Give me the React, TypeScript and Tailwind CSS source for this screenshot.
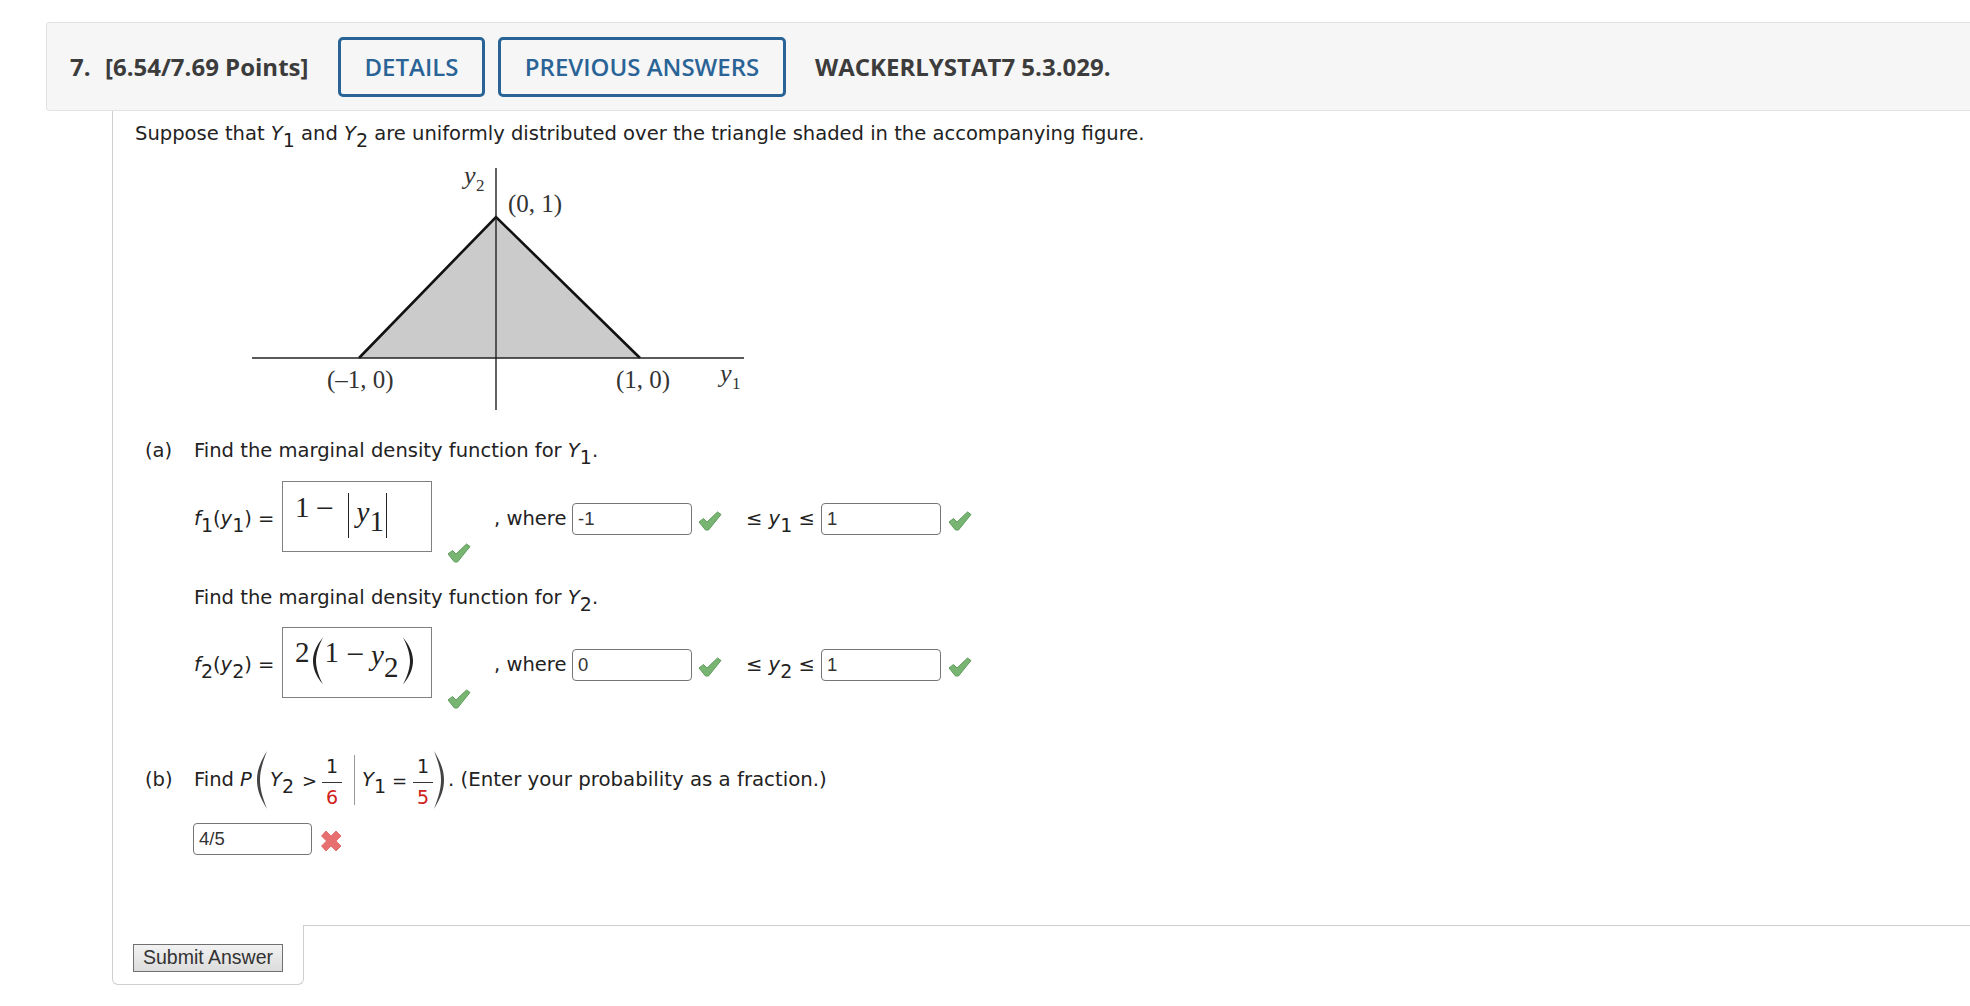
import React from 'react';

const Sub = ({ children }: { children: React.ReactNode }) => (
  <span className="text-[19px] not-italic align-[-7px] leading-none">{children}</span>
);

const Check = () => (
  <svg width="24" height="20" viewBox="0 0 24 20" className="shrink-0">
    <path d="M1 11 L5.5 7.5 L9 11 L19.5 1 L23 3.5 L10.5 19 L7.5 19 Z" fill="#78b573" stroke="#5f9c5c" strokeWidth="1" strokeLinejoin="round" />
  </svg>
);

const Cross = () => (
  <svg width="22" height="22" viewBox="0 0 22 22" className="shrink-0">
    <path d="M1.5 6 L6 1 L11 6 L16 1 L21 6 L16 11 L21 16 L16 21 L11 16 L6 21 L1.5 16 L6.5 11 Z" fill="#e76f6f" stroke="#e06060" strokeWidth="0.8" strokeLinejoin="round" />
  </svg>
);

const TextBox = ({ value, width = 'w-[120px]' }: { value: string; width?: string }) => (
  <input
    readOnly
    defaultValue={value}
    className={`${width} h-[32px] border border-[#767676] rounded-[4px] px-[5px] text-[18.5px] text-[#333] bg-white font-['Liberation_Sans',sans-serif] outline-none shrink-0`}
  />
);

const Fraction = ({ bottom }: { bottom: string }) => (
  <span className="inline-flex flex-col items-center w-[20px] h-[60px] text-[19px] shrink-0">
    <span className="border-b border-[#333] w-full text-center h-[33px] leading-[33px]">1</span>
    <span className="text-[#d0201a] leading-[27px] mt-[1px]">{bottom}</span>
  </span>
);

const BigParen = ({ flip }: { flip?: boolean }) => (
  <svg width="12" height="60" viewBox="0 0 12 60" className="shrink-0">
    <path
      d={flip ? 'M1 1 C9 14 11 22 11 30 C11 38 9 46 1 59 C6 46 8 38 8 30 C8 22 6 14 1 1 Z' : 'M11 1 C3 14 1 22 1 30 C1 38 3 46 11 59 C6 46 4 38 4 30 C4 22 6 14 11 1 Z'}
      fill="#444"
    />
  </svg>
);

const MathParen = ({ flip }: { flip?: boolean }) => (
  <svg width="12" height="48" viewBox="0 0 12 48" className="shrink-0">
    <path
      d={flip ? 'M1 0.5 C9 10 11 18 11 24 C11 30 9 38 1 47.5 C6 38 8 30 8 24 C8 18 6 10 1 0.5 Z' : 'M11 0.5 C3 10 1 18 1 24 C1 30 3 38 11 47.5 C6 38 4 30 4 24 C4 18 6 10 11 0.5 Z'}
      fill="#222"
    />
  </svg>
);

const Minus = () => <span className="text-[32px] leading-none w-[18px] text-center shrink-0">−</span>;

const Figure = () => (
  <svg width="500" height="247" viewBox="0 0 500 247" className="block ml-[118px]" fontFamily="'Liberation Serif', serif" fill="#333" fontSize="25">
    <polygon points="107,193 244,52 388,193" fill="#cbcbcb" />
    <path d="M107 193 L244 52 L388 193" fill="none" stroke="#111" strokeWidth="2.6" />
    <line x1="0" y1="193" x2="492" y2="193" stroke="#222" strokeWidth="1.4" />
    <line x1="244" y1="3" x2="244" y2="245" stroke="#222" strokeWidth="1.4" />
    <text x="212" y="19" fontStyle="italic" fontSize="26">y</text>
    <text x="224" y="26" fontSize="17">2</text>
    <text x="256" y="47">(0, 1)</text>
    <text x="75" y="223">(–1, 0)</text>
    <text x="364" y="223">(1, 0)</text>
    <text x="468" y="217" fontStyle="italic" fontSize="26">y</text>
    <text x="480" y="224" fontSize="17">1</text>
  </svg>
);

const Serif = ({ children }: { children: React.ReactNode }) => (
  <span className="font-['Liberation_Serif',serif] text-[#222] text-[29px] whitespace-nowrap flex items-center">{children}</span>
);

type RowProps = {
  name: React.ReactNode;
  answer: React.ReactNode;
  low: string;
  high: string;
  idx: string;
};

const DensityRow = ({ name, answer, low, high, idx }: RowProps) => (
  <div className="flex ml-[60px] h-[71px]">
    <div className="w-[88px] self-center pt-[5px] whitespace-nowrap">{name}</div>
    <div className="w-[150px] border border-[#808080] shrink-0 flex items-start pl-[12px]">{answer}</div>
    <div className="self-end ml-[15px] mb-[-11px]"><Check /></div>
    <div className="flex items-center ml-[23px] self-center pt-[5px]">
      <span className="w-[78px] whitespace-nowrap">, where</span>
      <TextBox value={low} />
      <div className="ml-[6px] mt-[3px]"><Check /></div>
      <span className="ml-[24px] w-[75px] whitespace-nowrap">≤ <i>y</i><Sub>{idx}</Sub> ≤</span>
      <TextBox value={high} />
      <div className="ml-[7px] mt-[3px]"><Check /></div>
    </div>
  </div>
);

export default function App() {
  return (
    <div className="min-h-screen bg-white overflow-hidden pt-[22px] text-[19.55px] text-[#222] font-['DejaVu_Sans',Verdana,sans-serif]">
      <div className="ml-[46px] mr-[-10px] h-[89px] bg-[#f6f6f6] border border-[#e2e2e2] rounded-[3px] flex items-center pl-[23px] font-['Open_Sans',sans-serif] text-[24px] font-semibold text-[#3c3c3c]">
        <span className="w-[35px] font-bold">7.</span>
        <span className="w-[233px] whitespace-nowrap font-bold">[6.54/7.69 Points]</span>
        <button className="h-[60px] w-[147px] border-[3px] border-[#2a6496] rounded-[5px] text-[#2a6496]">DETAILS</button>
        <button className="ml-[13px] h-[60px] w-[288px] border-[3px] border-[#2a6496] rounded-[5px] text-[#2a6496]">PREVIOUS ANSWERS</button>
        <span className="ml-[29px] whitespace-nowrap font-bold">WACKERLYSTAT7 5.3.029.</span>
      </div>

      <div className="ml-[112px] border-l border-[#cfcfcf] pl-[21px] pt-[9px] pb-[70px]">
        <p className="leading-[28px] ml-[1px]">
          Suppose that <i>Y</i><Sub>1</Sub> and <i>Y</i><Sub>2</Sub> are uniformly distributed over the triangle shaded in the accompanying figure.
        </p>

        <div className="mt-[15px]"><Figure /></div>

        <div className="mt-[25px] h-[28px] leading-[28px] flex pl-[11px] whitespace-nowrap">
          <span className="w-[49px]">(a)</span>
          <span>Find the marginal density function for <i>Y</i><Sub>1</Sub>.</span>
        </div>

        <div className="mt-[16px]">
          <DensityRow
            idx="1"
            low="-1"
            high="1"
            name={<><i>f</i><Sub>1</Sub>(<i>y</i><Sub>1</Sub>) =</>}
            answer={
              <Serif>
                <span className="mt-[-4px]">1</span>
                <span className="ml-[6px] mt-[-4px] flex"><Minus /></span>
                <span className="ml-[14px] mt-[11px] border-x border-[#222] h-[45px] flex items-center pl-[8px] pr-[2px]">
                  <i className="mt-[-6px]">y</i>
                  <span className="mt-[12px]">1</span>
                </span>
              </Serif>
            }
          />
        </div>

        <div className="mt-[32px] h-[28px] leading-[28px] ml-[60px] whitespace-nowrap">
          Find the marginal density function for <i>Y</i><Sub>2</Sub>.
        </div>

        <div className="mt-[15px]">
          <DensityRow
            idx="2"
            low="0"
            high="1"
            name={<><i>f</i><Sub>2</Sub>(<i>y</i><Sub>2</Sub>) =</>}
            answer={
              <Serif>
                <span className="flex items-center h-[66px]">
                  <span className="mt-[-16px]">2</span>
                  <span className="ml-[2px]"><MathParen /></span>
                  <span className="ml-[1px] mt-[-16px]">1</span>
                  <span className="ml-[7px] mt-[-14px] flex"><Minus /></span>
                  <i className="ml-[7px] mt-[-10px]">y</i>
                  <span className="mt-[14px]">2</span>
                  <span className="ml-[4px]"><MathParen flip /></span>
                </span>
              </Serif>
            }
          />
        </div>

        <div className="mt-[50px] h-[60px] flex items-center pl-[11px] pt-[4px] whitespace-nowrap">
          <span className="w-[49px]">(b)</span>
          <span className="w-[46px]">Find</span>
          <i className="w-[16px]">P</i>
          <BigParen />
          <span className="ml-[2px] w-[32px]"><i>Y</i><Sub>2</Sub></span>
          <span className="w-[20px] text-[18px]">&gt;</span>
          <Fraction bottom="6" />
          <span className="ml-[12px] w-px h-[50px] bg-[#999]" />
          <span className="ml-[7px] w-[30px]"><i>Y</i><Sub>1</Sub></span>
          <span className="w-[21px] text-[18px]">=</span>
          <Fraction bottom="5" />
          <BigParen flip />
          <span className="ml-[3px] text-[19.75px]">. (Enter your probability as a fraction.)</span>
        </div>

        <div className="mt-[15px] ml-[59px] flex items-center">
          <TextBox value="4/5" width="w-[119px]" />
          <div className="ml-[8px] mt-[3px]"><Cross /></div>
        </div>
      </div>

      <div className="ml-[112px] flex h-[60px]">
        <div className="w-[192px] shrink-0 border-x border-b border-[#cfcfcf] rounded-b-[6px] pl-[20px] pt-[18px]">
          <button className="w-[150px] h-[28px] border border-[#707070] bg-gradient-to-b from-[#f2f2f2] to-[#dcdcdc] text-[19.5px] leading-none text-[#333] font-['Liberation_Sans',sans-serif]">Submit Answer</button>
        </div>
        <div className="flex-1 border-t border-[#cfcfcf]" />
      </div>
    </div>
  );
}
